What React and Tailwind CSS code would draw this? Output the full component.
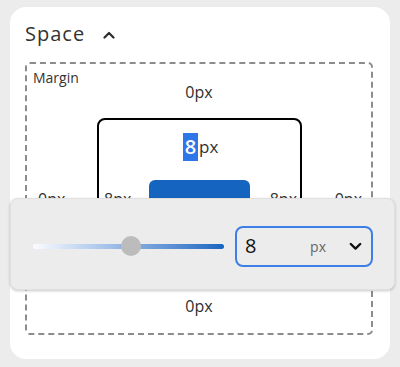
import React from "react";

const font = { fontFamily: '"Open Sans", "Noto Sans", Arial, sans-serif' };

function ChevronUp() {
  return (
    <svg width="12" height="8" viewBox="0 0 12 8" className="mt-[1px]">
      <path d="M1.5 6.5 L6 2 L10.5 6.5" fill="none" stroke="#2b2b2b" strokeWidth="2.2" strokeLinecap="round" strokeLinejoin="round" />
    </svg>
  );
}

function ChevronDown() {
  return (
    <svg width="13" height="9" viewBox="0 0 13 9">
      <path d="M1.8 2 L6.5 6.6 L11.2 2" fill="none" stroke="#111" strokeWidth="2.4" strokeLinecap="round" strokeLinejoin="round" />
    </svg>
  );
}

export default function App() {
  return (
    <div className="relative w-[400px] h-[367px] overflow-hidden bg-[#ececec] pt-[7px] pl-[10px] text-[#2f2f2f]" style={font}>
      <div className="w-[380px] h-[352px] bg-white rounded-[16px] px-[15px] pt-[13px]">
        <div className="flex items-center gap-[18px] h-[28px]">
          <span className="text-[20px] leading-[28px] tracking-[1px] text-[#333]">Space</span>
          <ChevronUp />
        </div>
        <div className="mt-[14px] w-[348px] h-[273px] border-2 border-dashed border-[#8c8c8c] rounded-[5px] flex flex-col">
          <div className="h-[54px] grid grid-cols-[1fr_auto_1fr]">
            <span className="self-start pl-[6px] pt-[6px] text-[14px] leading-[16px] text-[#333]">Margin</span>
            <span className="self-center text-[16px] leading-[20px] pt-[2px]">0px</span>
            <span />
          </div>
          <div className="flex items-center h-[161px]">
            <div className="w-[70px] pl-[11px] text-[16px] leading-[20px]">0px</div>
            <div className="w-[205px] h-[161px] border-2 border-black rounded-[8px] flex flex-col">
              <div className="h-[60px] flex items-center justify-center pb-[6px]">
                <span className="bg-[#2f76e8] text-white font-semibold text-[20px] leading-[28px] px-[2px] ml-[2px]">8</span>
                <span className="text-[17px] leading-[28px] pl-[1px]">px</span>
              </div>
              <div className="grid grid-cols-[50px_101px_50px] items-center h-[37px]">
                <span className="pl-[5px] text-[16px] leading-[20px]">8px</span>
                <div className="h-[37px] bg-[#1565c0] rounded-[6px]" />
                <span className="text-right pr-[3px] text-[16px] leading-[20px]">8px</span>
              </div>
              <div className="h-[60px] flex items-center justify-center">
                <span className="text-[16px] leading-[20px]">8px</span>
              </div>
            </div>
            <div className="w-[69px] text-right pr-[9px] text-[16px] leading-[20px]">0px</div>
          </div>
          <div className="h-[54px] flex items-center justify-center">
            <span className="text-[16px] leading-[20px]">0px</span>
          </div>
        </div>
      </div>

      <div className="absolute left-[10px] top-[198px] w-[385px] h-[92px] bg-[#ececec] rounded-[8px] border border-[#e0e0e0] shadow-[0_1px_3px_rgba(0,0,0,0.22)] flex items-center pl-[22px] pt-[4px]">
        <div className="relative w-[191px] h-[20px] flex items-center">
          <div className="w-full h-[5px] rounded-full bg-gradient-to-r from-[#fbfcff] to-[#1565c0]" />
          <div className="absolute left-[88px] top-0 w-[20px] h-[20px] rounded-full bg-[#bcbcbc]" />
        </div>
        <div className="ml-[11px] w-[138px] h-[41px] border-2 border-[#3d7fe6] rounded-[8px] flex items-center pl-[8px] pr-[9px]">
          <span className="text-[20px] leading-[24px] text-[#111] flex-1">8</span>
          <span className="text-[14px] text-[#666] mr-[23px]">px</span>
          <ChevronDown />
        </div>
      </div>
    </div>
  );
}
